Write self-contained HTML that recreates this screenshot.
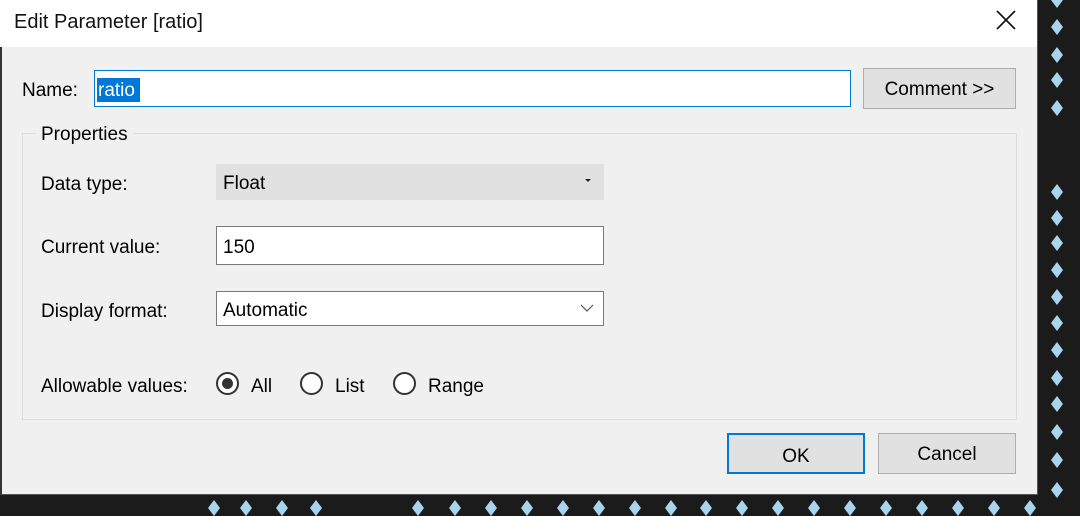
<!DOCTYPE html>
<html><head><style>
*{box-sizing:border-box;margin:0;padding:0}
body{width:1080px;height:516px;background:#1b1b1b;position:relative;overflow:hidden;font-family:"Liberation Sans",sans-serif;font-size:19px;color:#000}
.a{position:absolute}
.dlg{left:0;top:0;width:1038px;height:495px;background:#f0f0f0;border-left:2px solid #333;border-right:1px solid #555;border-bottom:1px solid #555}
.title{left:0;top:0;width:1037px;height:47px;background:#fff}
.lbl{position:absolute;line-height:22px}
.d{position:absolute;width:12px;height:16px;background:#a9d4ee;clip-path:polygon(50% 0,100% 50%,50% 100%,0 50%)}
.btn{position:absolute;background:#e1e1e1;border:1px solid #adadad;text-align:center}
.inp{position:absolute;background:#fff;border:1px solid #7a7a7a}
.rad{position:absolute;width:23px;height:23px;border:2px solid #333;border-radius:50%;background:#fff}
</style></head><body>
<div id="dm"></div>
<div class="a dlg"></div>
<div class="a title"></div>
<div class="lbl" style="left:14px;top:11px;font-size:20px;color:#111">Edit Parameter [ratio]</div>
<svg class="a" style="left:996px;top:10px" width="20" height="20"><path d="M1 1L19 19M19 1L1 19" stroke="#111" stroke-width="1.6"/></svg>

<div class="lbl" style="left:22px;top:80px">Name:</div>
<div class="inp" style="left:94px;top:70px;width:757px;height:37px;border-color:#0078d7"></div>
<div class="a" style="left:97px;top:78px;width:43px;height:24px;background:#0078d7"></div>
<div class="lbl" style="left:98px;top:80px;color:#fff">ratio</div>
<div class="btn" style="left:863px;top:68px;width:153px;height:41px;line-height:41px">Comment &gt;&gt;</div>

<div class="a" style="left:22px;top:133px;width:995px;height:287px;border:1px solid #dcdcdc"></div>
<div class="lbl" style="left:36px;top:124px;background:#f0f0f0;padding:0 5px">Properties</div>

<div class="lbl" style="left:41px;top:174px">Data type:</div>
<div class="a" style="left:216px;top:164px;width:388px;height:36px;background:#e1e1e1"></div>
<div class="lbl" style="left:223px;top:173px">Float</div>
<div class="a" style="left:585px;top:179px;width:0;height:0;border-left:3px solid transparent;border-right:3px solid transparent;border-top:3px solid #222"></div>

<div class="lbl" style="left:41px;top:237px">Current value:</div>
<div class="inp" style="left:216px;top:226px;width:388px;height:39px"></div>
<div class="lbl" style="left:223px;top:237px">150</div>

<div class="lbl" style="left:41px;top:301px">Display format:</div>
<div class="inp" style="left:216px;top:291px;width:388px;height:35px"></div>
<div class="lbl" style="left:223px;top:300px">Automatic</div>
<svg class="a" style="left:580px;top:303px" width="14" height="10"><path d="M1 2L7 8L13 2" stroke="#555" fill="none" stroke-width="1.2"/></svg>

<div class="lbl" style="left:41px;top:376px">Allowable values:</div>
<div class="rad" style="left:216px;top:372px"></div>
<div class="a" style="left:222px;top:378px;width:11px;height:11px;border-radius:50%;background:#333"></div>
<div class="lbl" style="left:251px;top:376px">All</div>
<div class="rad" style="left:300px;top:372px"></div>
<div class="lbl" style="left:335px;top:376px">List</div>
<div class="rad" style="left:393px;top:372px"></div>
<div class="lbl" style="left:428px;top:376px">Range</div>

<div class="btn" style="left:727px;top:433px;width:138px;height:41px;line-height:39px;border:2px solid #0078d7;padding-top:2px">OK</div>
<div class="btn" style="left:878px;top:433px;width:138px;height:41px;line-height:41px">Cancel</div>

<script>
var h='';
[0,27,55,80,108,192,218,243,270,297,323,350,378,404,432,460,490].forEach(function(y){h+='<div class="d" style="left:1051px;top:'+(y-8)+'px"></div>'});
[214,246,282,316,418,455,491,527,563,599,635,671,706,742,778,814,850,886,922,958,994,1030].forEach(function(x){h+='<div class="d" style="left:'+(x-6)+'px;top:500px"></div>'});
document.getElementById('dm').innerHTML=h;
</script>
</body></html>
